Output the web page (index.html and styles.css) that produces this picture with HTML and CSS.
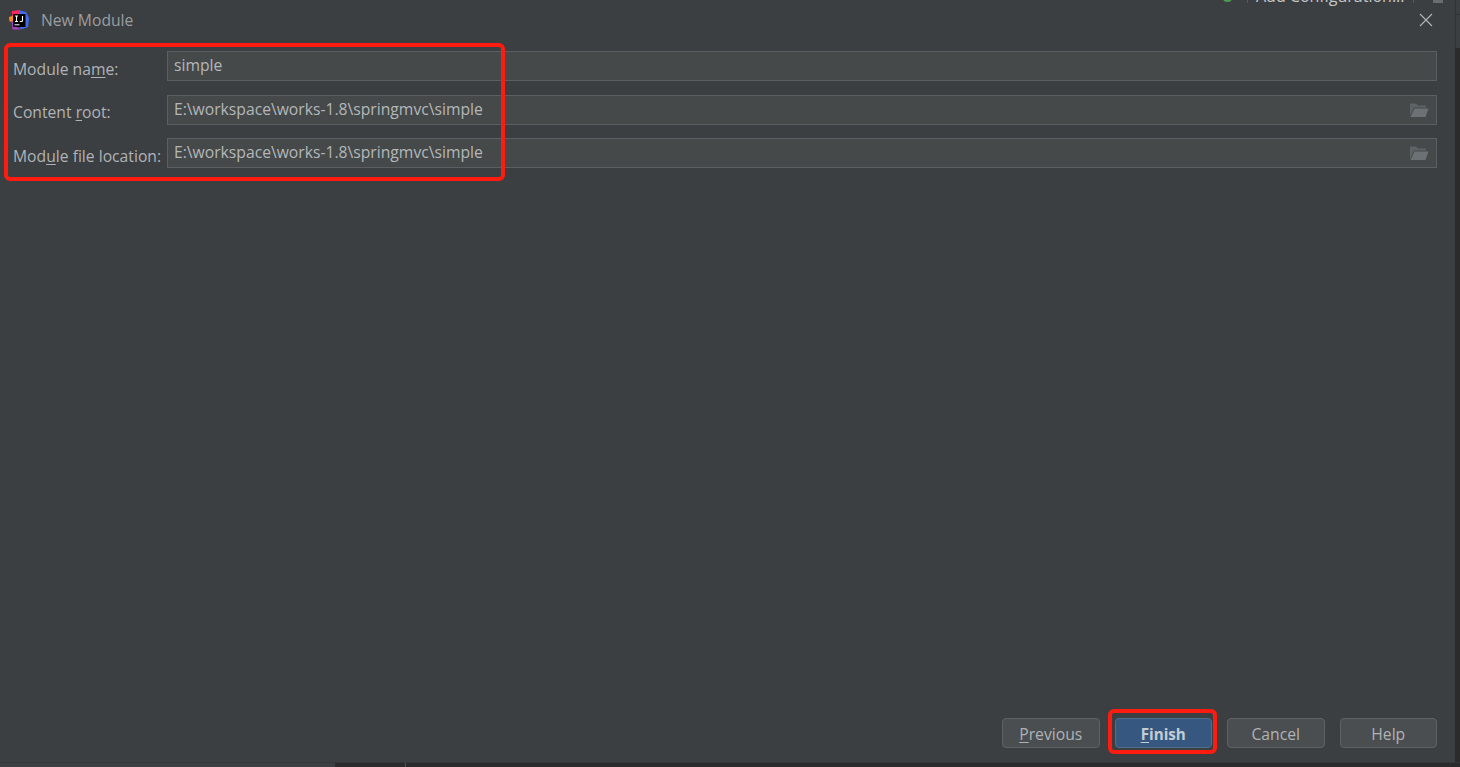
FILE: index.html
```html
<!DOCTYPE html>
<html lang="en">
<head>
<meta charset="utf-8">
<title>New Module</title>
<link rel="stylesheet" href="styles.css">
</head>
<body>
<div class="behind">
  <div class="side-strip"></div>
  <div class="bottom-edge"><span class="bottom-sep"></span></div>
</div>
<main class="dialog">
  <header class="titlebar">
    <svg class="logo" viewBox="0 0 20 20" width="20" height="20" aria-hidden="true">
      <path d="M3 1 L11 0 L11 8 L3 9 Z" fill="#f5285f"/>
      <path d="M0 7 L5 5.500 L5 12 L0.500 11.500 Z" fill="#ff8a1c"/>
      <path d="M11 0.500 L17 2 L20 8 L19 17 L12 19.500 L9 14 Z" fill="#3f6cf0"/>
      <path d="M2.500 10 L8 17 L12 19.500 L3.500 19.500 Z" fill="#a83fc4"/>
      <rect x="4" y="4" width="12.500" height="13" fill="#000"/>
      <rect x="5.500" y="14.300" width="5" height="1" fill="#fff"/>
      <path d="M6 6 H9 M7.500 6 V11.500 M6 11.500 H9 M13.500 6 V10.500 Q13.500 11.500 12.500 11.500 H10.800" fill="none" stroke="#fff" stroke-width="1.100"/>
    </svg>
    <h1 class="title">New Module</h1>
    <svg class="close" viewBox="0 0 14 14" width="14" height="14" aria-hidden="true">
      <path d="M1 1 L13 13 M13 1 L1 13" stroke="#b4b6b8" stroke-width="1.100" fill="none"/>
    </svg>
  </header>
  <section class="form">
    <div class="row row-name">
      <label class="label">Module na<u>m</u>e:</label>
      <div class="field"><span class="value">simple</span></div>
    </div>
    <div class="row row-root">
      <label class="label">Content <u>r</u>oot:</label>
      <div class="field"><span class="value">E:\workspace\works-1.8\springmvc\simple</span>
        <svg class="folder" viewBox="0 0 20 16" width="20" height="16" aria-hidden="true">
          <path d="M1 14 V1.500 H7 L9 3.500 H17 V5.500 H5 L1 14 Z" fill="#5d6265"/>
          <path d="M5.500 6.500 H19.500 L16.500 15 H1.500 Z" fill="#6b7174"/>
        </svg>
      </div>
    </div>
    <div class="row row-file">
      <label class="label">Mod<u>u</u>le file location:</label>
      <div class="field"><span class="value">E:\workspace\works-1.8\springmvc\simple</span>
        <svg class="folder" viewBox="0 0 20 16" width="20" height="16" aria-hidden="true">
          <path d="M1 14 V1.500 H7 L9 3.500 H17 V5.500 H5 L1 14 Z" fill="#5d6265"/>
          <path d="M5.500 6.500 H19.500 L16.500 15 H1.500 Z" fill="#6b7174"/>
        </svg>
      </div>
    </div>
  </section>
  <footer class="actions">
    <button class="btn"><u>P</u>revious</button>
    <button class="btn btn-primary"><u>F</u>inish</button>
    <button class="btn">Cancel</button>
    <button class="btn">Help</button>
  </footer>
</main>
<div class="peek">
  <span class="peek-run"></span>
  <span class="peek-sep"></span>
  <span class="peek-text">Add Configuration...</span>
  <span class="peek-sep"></span>
  <span class="peek-icon"></span>
</div>
<div class="mark mark-form"></div>
<div class="mark mark-finish"></div>
</body>
</html>
```
FILE: styles.css
```css
* { box-sizing: border-box; }
html, body { margin: 0; height: 100%; }
body {
  position: relative;
  width: 1460px;
  height: 767px;
  overflow: hidden;
  background: #3c3f41;
  color: #b0b3b6;
  font-family: "Open Sans", "Noto Sans", sans-serif;
  font-size: 15.7px;
}
u { text-underline-offset: 2px; text-decoration-thickness: 1px; }

.dialog {
  position: absolute;
  left: 0; top: 0;
  width: 1455px;
  height: 762px;
  display: flex;
  flex-direction: column;
  background: #3c3f41;
}
.titlebar {
  display: flex;
  align-items: center;
  height: 51px;
  padding: 0 22px 11px 9px;
}
.logo { flex: none; }
.title {
  margin: 0 0 0 12px;
  flex: 1;
  font-size: 15.7px;
  font-weight: 400;
  color: #9a9da0;
}
.form { display: flex; flex-direction: column; padding-left: 13px; padding-right: 18px; }
.row { display: flex; align-items: center; }
.row-root { margin-top: 14px; }
.row-file { margin-top: 13px; }
.label { width: 154px; flex: none; line-height: 20px; padding-top: 3px; white-space: nowrap; color: #b0b3b6; }
.row-name .label { padding-top: 6px; }
.row-file .label { padding-top: 5px; }
.field {
  flex: 1;
  height: 30px;
  display: flex;
  align-items: center;
  justify-content: space-between;
  padding: 0 7px 0 6px;
  background: #45494a;
  border: 1px solid #5b5f61;
  color: #b4b7b9;
}
.value { line-height: 26px; margin-top: -2px; }
.actions {
  margin-top: auto;
  display: flex;
  justify-content: flex-end;
  gap: 15px;
  padding-right: 18px;
  padding-bottom: 14px;
}
.btn {
  width: 97.5px;
  height: 30px;
  padding: 2px 0 0;
  border: 1px solid #5e6264;
  border-radius: 4px;
  background: #4a4e50;
  color: #b0b3b6;
  font: inherit;
}
.btn-primary {
  background: #365880;
  border-color: #4c708c;
  color: #c4ccd4;
  font-size: 15.2px;
  font-weight: 700;
}
.mark {
  position: absolute;
  border: 4px solid #fe1c10;
  border-radius: 6px;
}
.mark-form { left: 4px; top: 43px; width: 501px; height: 138px; }
.mark-finish { left: 1108px; top: 709px; width: 109px; height: 45px; }

.behind { position: absolute; inset: 0; background: #2b2b2b; }
.peek {
  position: absolute;
  left: 1223px; top: -10px;
  display: flex;
  align-items: center;
  height: 13px;
  font-size: 16px;
  line-height: 13px;
  color: #c5c8ca;
}
.peek-run { width: 9px; height: 7px; background: #4c9d50; border-radius: 50%; margin-right: 15px; margin-top: 3px; }
.peek-sep { width: 1px; height: 13px; background: #55585a; }
.peek-text { width: 165px; padding-left: 8px; white-space: nowrap; }
.peek-icon { width: 10px; height: 13px; margin-left: 19px; background: #6a6d6f; }
.side-strip {
  position: absolute;
  right: 0; top: 0;
  width: 5px;
  height: 48px;
  background: linear-gradient(to bottom, #3c3f41 14px, #303234 14px, #303234 15px, #3c3f41 15px);
  border-left: 1px solid #303234;
}
.bottom-edge { position: absolute; left: 0; bottom: 0; width: 100%; height: 5px; background: linear-gradient(to right, #3c3f41 335px, #2b2b2b 335px); border-top: 1px solid #33363a; }
.bottom-sep { position: absolute; left: 405px; top: 0; width: 1px; height: 5px; background: #555; }
```
